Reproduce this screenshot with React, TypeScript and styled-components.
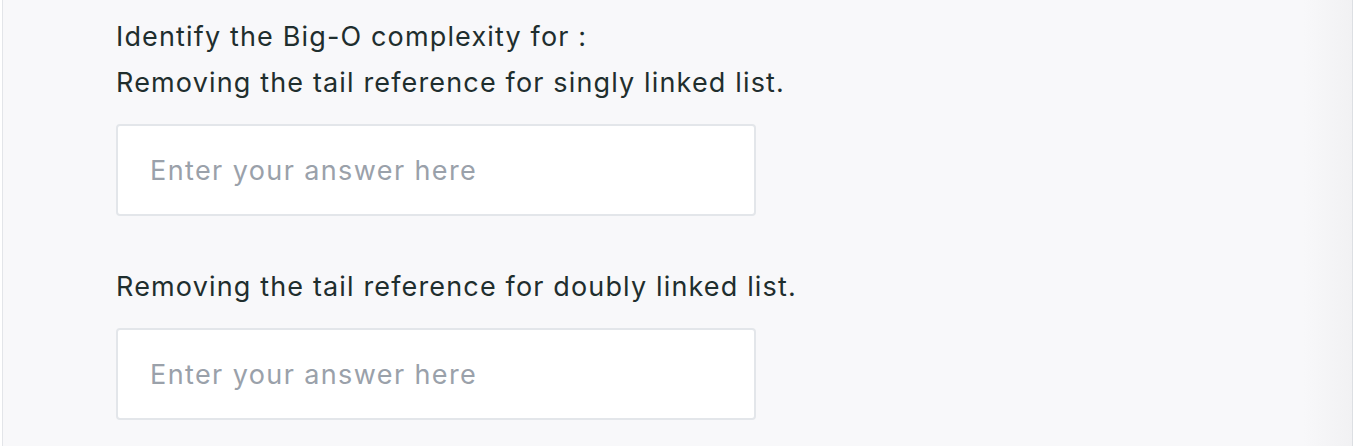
import React from 'react';
import styled, { createGlobalStyle } from 'styled-components';

const GlobalStyle = createGlobalStyle`
  html, body {
    margin: 0;
    padding: 0;
    background: #ffffff;
  }
  body {
    font-family: Inter, "Open Sans", Arial, sans-serif;
  }
`;

const Panel = styled.section`
  box-sizing: border-box;
  margin-left: 2px;
  width: 1351px;
  height: 446px;
  padding: 14px 0 0 113px;
  background: linear-gradient(to right, #f8f8fa 0, #f8f8fa 1300px, #f1f1f3 1350px);
  border-left: 1px solid #e3e5e9;
  border-right: 1px solid #dcdfe3;
  overflow: hidden;
`;

const Question = styled.div`
  font-size: 27px;
  line-height: 46px;
  letter-spacing: 1.15px;
  color: #1f2e2e;
`;

const Block = styled.div<{ $gap?: number }>`
  margin-top: ${(p) => p.$gap ?? 0}px;
`;

const AnswerInput = styled.input`
  box-sizing: border-box;
  display: block;
  width: 640px;
  height: 92px;
  margin-top: 18px;
  padding: 0 32px;
  background: #ffffff;
  border: 2px solid #e3e6ea;
  border-radius: 4px;
  font-family: inherit;
  font-size: 27px;
  letter-spacing: 1.4px;
  color: #1f2e2e;
  outline: none;

  &::placeholder {
    color: #9aa1aa;
  }
`;

const questions = [
  'Removing the tail reference for singly linked list.',
  'Removing the tail reference for doubly linked list.',
];

export default function App() {
  return (
    <>
      <GlobalStyle />
      <Panel>
        <Question>Identify the Big-O complexity for :</Question>
        {questions.map((q, i) => (
          <Block key={q} $gap={i === 0 ? 0 : 48}>
            <Question>{q}</Question>
            <AnswerInput placeholder="Enter your answer here" />
          </Block>
        ))}
      </Panel>
    </>
  );
}
